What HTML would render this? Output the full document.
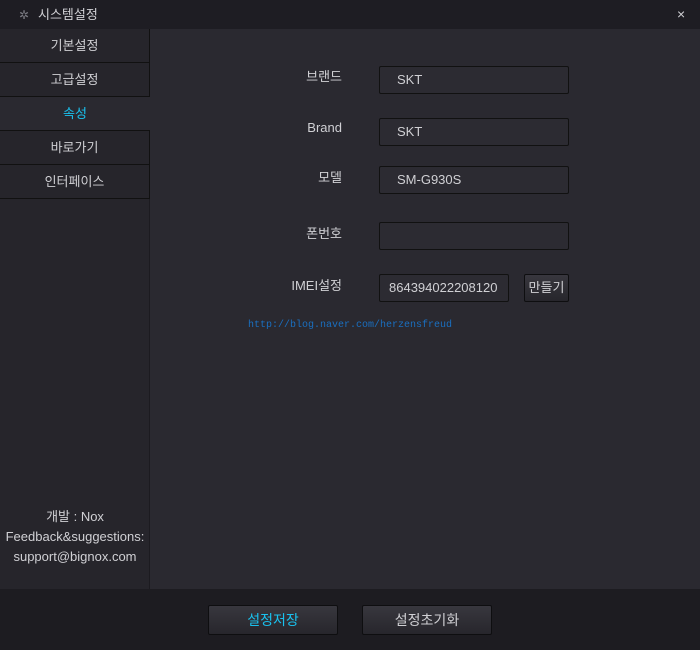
<!DOCTYPE html>
<html><head><meta charset="utf-8"><style>
*{margin:0;padding:0;box-sizing:border-box}
body{width:700px;height:650px;background:#2a2930;font-family:"Liberation Sans","Noto Sans CJK KR",sans-serif;font-size:13px;color:#d0d0d4;position:relative;overflow:hidden}
.a{position:absolute}
.title{left:0;top:0;width:700px;height:29px;background:#1e1d23}
.side{left:0;top:29px;width:150px;height:560px;background:#26252b;border-right:1px solid #1c1b20}
.item{position:absolute;left:0;width:150px;height:34px;border-right:1px solid #111;border-bottom:1px solid #111;text-align:center;line-height:33px;background:#26252b}
.sel{background:#2a2930;color:#19c2ef;border:none;border-bottom:1px solid #111}
.lbl{width:120px;text-align:right;left:222px}
.inp{border:1px solid #111;border-radius:2px;background:#2c2b32;height:28px;padding-left:17px;line-height:26px}
.foot{left:0;top:589px;width:700px;height:61px;background:#1d1c21}
.btn{height:30px;width:130px;border:1px solid #0e0e10;border-radius:2px;background:linear-gradient(#38373e,#27262c);text-align:center;line-height:28px;font-size:14px}
</style></head><body>
<div class="a title"></div>
<div class="a" style="left:19px;top:8px;color:#7a7a82;font-size:12px">✲</div>
<div class="a" style="left:38px;top:4px;font-size:13px;color:#d0d0d4">시스템설정</div>
<div class="a" style="left:677px;top:6px;font-size:14px">×</div>
<div class="a side">
<div class="item" style="top:0">기본설정</div>
<div class="item" style="top:34px">고급설정</div>
<div class="item sel" style="top:68px">속성</div>
<div class="item" style="top:102px">바로가기</div>
<div class="item" style="top:136px">인터페이스</div>
<div class="a" style="top:478px;left:0;width:150px;text-align:center;line-height:20px">개발 : Nox<br>Feedback&amp;suggestions:<br>support@bignox.com</div>
</div>
<div class="a lbl" style="top:66px">브랜드</div>
<div class="a inp" style="left:379px;top:66px;width:190px">SKT</div>
<div class="a lbl" style="top:120px">Brand</div>
<div class="a inp" style="left:379px;top:118px;width:190px">SKT</div>
<div class="a lbl" style="top:167px">모델</div>
<div class="a inp" style="left:379px;top:166px;width:190px">SM-G930S</div>
<div class="a lbl" style="top:223px">폰번호</div>
<div class="a inp" style="left:379px;top:222px;width:190px"></div>
<div class="a lbl" style="top:275px">IMEI설정</div>
<div class="a inp" style="left:379px;top:274px;width:130px;padding-left:9px">864394022208120</div>
<div class="a btn" style="left:524px;top:274px;width:45px;height:28px;line-height:26px;font-size:13px">만들기</div>
<div class="a" style="left:248px;top:320px;font-family:'Liberation Mono',monospace;font-size:10px;color:#1a6fc0">http://blog.naver.com/herzensfreud</div>
<div class="a foot"></div>
<div class="a btn" style="left:208px;top:605px;color:#19c2ef">설정저장</div>
<div class="a btn" style="left:362px;top:605px">설정초기화</div>
</body></html>
